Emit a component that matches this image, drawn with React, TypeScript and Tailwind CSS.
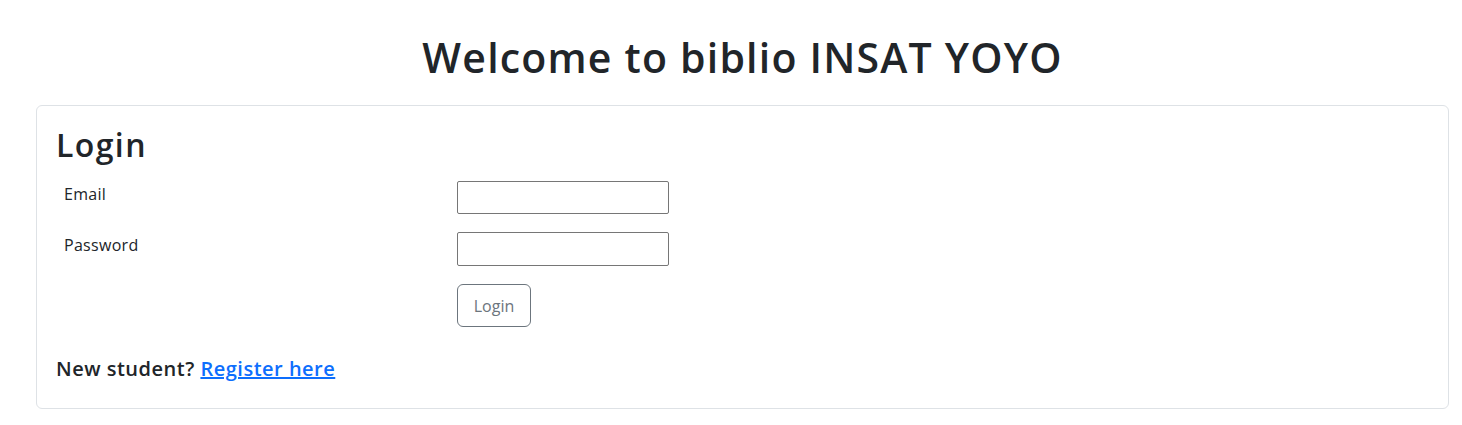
import React from "react";

export default function App() {
  const font = { fontFamily: '"Open Sans", "Noto Sans", sans-serif' };
  return (
    <div className="min-h-[425px] bg-white text-[#212529]" style={font}>
      <div className="ml-[36px] w-[1413px]">
        <h1 className="pt-[30px] pb-[21px] text-center text-[41px] font-semibold leading-[54px] tracking-[1.2px]">
          Welcome to biblio INSAT YOYO
        </h1>
        <div className="rounded-[6px] border border-[#dee2e6] px-[19px] pt-[20px] pb-[27px]">
          <h2 className="text-[32px] font-semibold leading-[38px] tracking-[1.4px]">Login</h2>
          <form className="mt-[17px] flex flex-col">
            <div className="flex items-start">
              <label className="w-[401px] pl-[8px] pt-[1px] text-[16px] leading-[24px] tracking-[0.3px]">Email</label>
              <input className="h-[33px] w-[212px] rounded-[2px] border border-[#767676]" />
            </div>
            <div className="mt-[18px] flex items-start">
              <label className="w-[401px] pl-[8px] pt-[1px] text-[16px] leading-[24px] tracking-[0.3px]">Password</label>
              <input type="password" className="h-[34px] w-[212px] rounded-[2px] border border-[#767676]" />
            </div>
            <div className="mt-[18px] flex">
              <div className="w-[401px]" />
              <button
                type="button"
                className="h-[43px] w-[74px] rounded-[6px] border border-[#6c757d] text-[16px] text-[#6c757d]"
              >
                Login
              </button>
            </div>
          </form>
          <p className="mt-[30px] text-[20px] font-semibold leading-[24px] tracking-[0.5px]">
            New student?{" "}
            <a href="#" className="text-[#0d6efd] underline">
              Register here
            </a>
          </p>
        </div>
      </div>
    </div>
  );
}
